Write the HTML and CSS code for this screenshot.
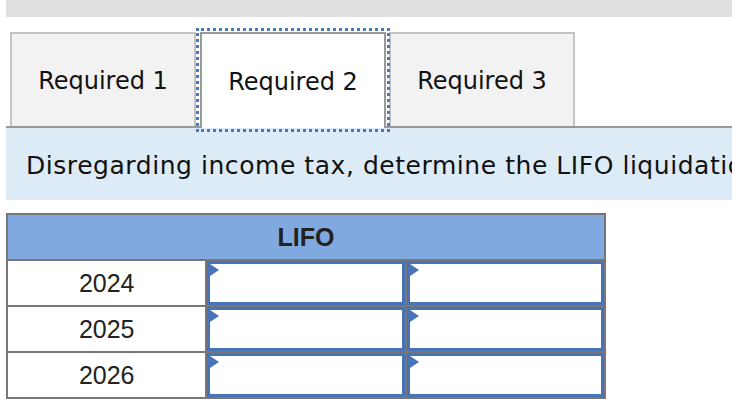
FILE: index.html
```html
<!DOCTYPE html>
<html>
<head>
<meta charset="utf-8">
<link rel="stylesheet" href="styles.css">
</head>
<body>
<div class="page">
  <div class="topbar"></div>
  <div class="tabs">
    <div class="tab">Required 1</div>
    <div class="tab active">Required 2</div>
    <div class="tab">Required 3</div>
  </div>
  <div class="prompt">Disregarding income tax, determine the LIFO liquidation profit or loss for each year.</div>
  <table class="grid">
    <tr class="head"><th colspan="3">LIFO</th></tr>
    <tr><td class="label">2024</td><td class="cell"><div class="inp"><span class="flag"></span></div></td><td class="cell"><div class="inp"><span class="flag"></span></div></td></tr>
    <tr><td class="label">2025</td><td class="cell"><div class="inp"><span class="flag"></span></div></td><td class="cell"><div class="inp"><span class="flag"></span></div></td></tr>
    <tr><td class="label">2026</td><td class="cell"><div class="inp"><span class="flag"></span></div></td><td class="cell"><div class="inp"><span class="flag"></span></div></td></tr>
  </table>
</div>
</body>
</html>
```
FILE: styles.css
```css
html, body { margin: 0; padding: 0; background: #fff; overflow: hidden; }
.page { padding-left: 6px; width: 726px; }
.topbar { height: 17px; background: #e0e0e0; }
.tabs {
  display: flex;
  margin-top: 15px;
  border-bottom: 2px solid #999;
  height: 94px;
  padding-left: 4px;
}
.tab {
  box-sizing: border-box;
  width: 186px;
  height: 94px;
  border: 2px solid #c4c4c4;
  border-bottom: none;
  background: #f2f2f2;
  font-family: "DejaVu Sans", Verdana, sans-serif;
  font-size: 24px;
  color: #111;
  display: flex;
  align-items: center;
  justify-content: center;
  padding-top: 2px;
}
.tab.active {
  margin-left: 4px;
  margin-right: 3px;
  height: 96px;
  background: #fff;
  border-color: #999;
  outline: 3px dotted #4a78c0;
  outline-offset: 1px;
  position: relative;
  z-index: 1;
}
.prompt {
  background: #ddebf7;
  height: 72px;
  display: flex;
  align-items: center;
  padding-left: 20px;
  padding-top: 2px;
  box-sizing: border-box;
  font-family: "DejaVu Sans", Verdana, sans-serif;
  font-size: 25px;
  letter-spacing: 0.55px;
  color: #111;
  white-space: nowrap;
  overflow: hidden;
}
.grid {
  margin-top: 13px;
  border-collapse: collapse;
  width: 600px;
  font-family: "Liberation Sans", Arial, sans-serif;
  font-size: 25px;
  color: #222;
}
.grid th, .grid td { border: 2px solid #777; padding: 0; }
.head th {
  background: #80aadf;
  height: 44px;
  font-weight: bold;
  text-align: center;
}
.label { width: 198px; height: 44px; text-align: center; background: #fff; }
.cell { width: 198px; height: 44px; }
.inp {
  box-sizing: border-box;
  height: 44px;
  border: 3px solid #4773b8;
  position: relative;
  background: #fff;
}
.flag {
  position: absolute;
  left: 0;
  top: 0;
  width: 0;
  height: 0;
  border-top: 6px solid transparent;
  border-bottom: 6px solid transparent;
  border-left: 9px solid #4773b8;
}
```
